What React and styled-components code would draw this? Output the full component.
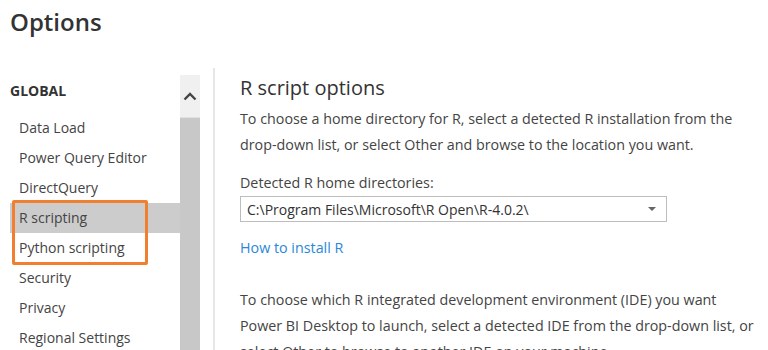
import React from "react";
import styled, { createGlobalStyle } from "styled-components";

const Global = createGlobalStyle`
  html, body { margin: 0; padding: 0; background: #fff; overflow: hidden; }
  body { font-family: "Open Sans", "Noto Sans", sans-serif; color: #444; }
`;

const Page = styled.div`
  width: 768px;
  height: 350px;
  overflow: hidden;
  position: relative;
`;

const Title = styled.h1`
  margin: 0;
  padding: 6px 0 0 10px;
  height: 68px;
  box-sizing: border-box;
  font-size: 24px;
  font-weight: 600;
  color: #333;
  line-height: 32px;
`;

const Body = styled.div`
  display: flex;
  align-items: stretch;
  height: 282px;
`;

const Side = styled.div`
  display: flex;
  width: 213px;
  padding-left: 10px;
  box-sizing: border-box;
  position: relative;
  overflow: hidden;
`;

const NavList = styled.div`
  width: 170px;
  display: flex;
  flex-direction: column;
`;

const NavHeading = styled.div`
  flex-shrink: 0;
  height: 45px;
  padding-top: 12px;
  box-sizing: border-box;
  font-size: 14px;
  font-weight: 700;
  color: #333;
  line-height: 22px;
`;

const NavItem = styled.div`
  flex-shrink: 0;
  height: 30px;
  line-height: 30px;
  padding-left: 9px;
  font-size: 14px;
  color: #444;
  background: ${(p) => (p.$selected ? "#cccccc" : "transparent")};
`;

const Scrollbar = styled.div`
  width: 20px;
  margin-top: 7px;
  display: flex;
  flex-direction: column;
  background: #c8c8c8;
`;

const ScrollButton = styled.div`
  height: 42px;
  background: #f0f0f0;
  display: flex;
  align-items: center;
  justify-content: center;
  border-bottom: 1px solid #e0e0e0;
`;

const Highlight = styled.div`
  position: absolute;
  left: 12px;
  top: 132px;
  width: 136px;
  height: 65px;
  box-sizing: border-box;
  border: 3px solid #f0802f;
  border-radius: 2px;
`;

const Divider = styled.div`
  width: 2px;
  background: #e6e6e6;
`;

const Content = styled.div`
  flex: 1;
  padding: 6px 0 0 25px;
  color: #444;
`;

const Heading = styled.h2`
  margin: 0;
  font-size: 20px;
  font-weight: 400;
  line-height: 28px;
  color: #333;
`;

const Para = styled.p`
  margin: ${(p) => p.$mt || 4}px 0 0 0;
  font-size: 14.3px;
  line-height: 26px;
  white-space: nowrap;
`;

const Label = styled.div`
  margin-top: 12px;
  font-size: 14.3px;
  line-height: 26px;
`;

const Select = styled.div`
  width: 427px;
  height: 26px;
  box-sizing: border-box;
  border: 1px solid #bdbdbd;
  display: flex;
  align-items: center;
  justify-content: space-between;
  padding: 0 10px 0 6px;
  font-size: 14px;
  color: #333;
`;

const Caret = styled.span`
  width: 0;
  height: 0;
  border-left: 4px solid transparent;
  border-right: 4px solid transparent;
  border-top: 4px solid #666;
`;

const Link = styled.a`
  display: block;
  margin-top: 13px;
  font-size: 14.3px;
  line-height: 26px;
  color: #2b88d8;
  text-decoration: none;
`;

const items = [
  "Data Load",
  "Power Query Editor",
  "DirectQuery",
  "R scripting",
  "Python scripting",
  "Security",
  "Privacy",
  "Regional Settings",
];

export default function App() {
  return (
    <Page>
      <Global />
      <Title>Options</Title>
      <Body>
        <Side>
          <NavList>
            <NavHeading>GLOBAL</NavHeading>
            {items.map((it) => (
              <NavItem key={it} $selected={it === "R scripting"}>
                {it}
              </NavItem>
            ))}
          </NavList>
          <Scrollbar>
            <ScrollButton>
              <svg width="14" height="9" viewBox="0 0 14 9">
                <path d="M1.5 7.5 L7 2 L12.5 7.5" fill="none" stroke="#444" strokeWidth="2.4" />
              </svg>
            </ScrollButton>
          </Scrollbar>
          <Highlight />
        </Side>
        <Divider />
        <Content>
          <Heading>R script options</Heading>
          <Para>
            To choose a home directory for R, select a detected R installation from the
            <br />
            drop-down list, or select Other and browse to the location you want.
          </Para>
          <Label>Detected R home directories:</Label>
          <Select>
            <span>C:\Program Files\Microsoft\R Open\R-4.0.2\</span>
            <Caret />
          </Select>
          <Link>How to install R</Link>
          <Para $mt={26}>
            To choose which R integrated development environment (IDE) you want
            <br />
            Power BI Desktop to launch, select a detected IDE from the drop-down list, or
            <br />
            select Other to browse to another IDE on your machine.
          </Para>
        </Content>
      </Body>
    </Page>
  );
}
